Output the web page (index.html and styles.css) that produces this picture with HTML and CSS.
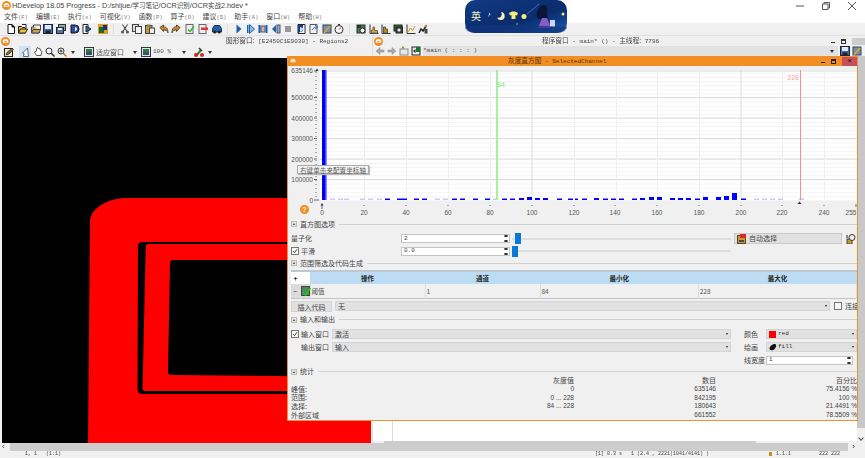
FILE: index.html
```html
<!DOCTYPE html>
<html lang="zh-CN">
<head>
  <meta charset="UTF-8" />
  <title>HDevelop 18.05 Progress</title>
  <link rel="stylesheet" href="styles.css">
</head>
<body>
  <!-- shared toolbar icons -->
  <svg class="defs" width="0" height="0">
    <symbol id="i-new" viewBox="0 0 10 10"><path d="M2 .5h4l2.500 2.500v6.500h-6.500z" fill="#fff" stroke="#111"/><path d="M6 .5v2.500h2.500" fill="#111" stroke="#111"/></symbol>
    <symbol id="i-open" viewBox="0 0 10 10"><path d="M.5 9V2.500h3l1 1h3V9z" fill="#e8b93c" stroke="#222"/><path d="M4 .5h4v4" fill="#fff" stroke="#222"/><path d="M.5 9l2-4h7l-2 4z" fill="#f0c040" stroke="#222"/></symbol>
    <symbol id="i-recent" viewBox="0 0 10 10"><path d="M.5 9V3h8v6z" fill="#d8b060" stroke="#444"/><path d="M2.500 3V1h7v5" fill="#eee" stroke="#444"/><path d="M.5 9l1.500-3.500h7.500L8 9z" fill="#c9a24f" stroke="#444"/></symbol>
    <symbol id="i-save" viewBox="0 0 10 10"><rect x=".5" y=".5" width="9" height="9" fill="#3d6ea5" stroke="#223"/><rect x="2" y="1" width="6" height="4" fill="#dfe8f2"/><rect x="2.500" y="6.500" width="5" height="3" fill="#222"/></symbol>
    <symbol id="i-saveall" viewBox="0 0 10 10"><rect x="2.500" y=".5" width="7" height="6" fill="#8aa" stroke="#333"/><rect x=".5" y="3.500" width="7" height="6" fill="#4f76a0" stroke="#223"/><rect x="2" y="4" width="4" height="2" fill="#eee"/></symbol>
    <symbol id="i-hdev" viewBox="0 0 10 10"><path d="M1 1h4a4 4 0 0 1 0 8H1z" fill="#2a4fa8" stroke="#111"/><path d="M5 3a2 2 0 0 1 0 4z" fill="#eee"/></symbol>
    <symbol id="i-play-doc" viewBox="0 0 10 10"><path d="M1 .5h5v9H1z" fill="#fff" stroke="#222"/><path d="M4 2l5 3-5 3z" fill="#2a6db5" stroke="#123"/></symbol>
    <symbol id="i-chip" viewBox="0 0 10 10"><rect width="10" height="10" fill="#d8a020"/><rect x="1" y="3" width="5" height="6" fill="#176a2e"/><rect x="5" y="1" width="4" height="5" fill="#1d2f8a"/></symbol>
    <symbol id="i-cut" viewBox="0 0 10 10"><path d="M2.500 .5l4.500 7M7.500 .5l-4.500 7" stroke="#333" fill="none"/><circle cx="2.500" cy="8" r="1.500" fill="#555"/><circle cx="7.500" cy="8" r="1.500" fill="#555"/></symbol>
    <symbol id="i-copy" viewBox="0 0 10 10"><rect x=".5" y=".5" width="6" height="7" fill="#ddd" stroke="#444"/><rect x="3.500" y="2.500" width="6" height="7" fill="#f4f4f4" stroke="#444"/></symbol>
    <symbol id="i-paste" viewBox="0 0 10 10"><rect x=".5" y="1.500" width="6.500" height="8" fill="#c2923c" stroke="#443"/><rect x="2" y=".5" width="3.500" height="2" fill="#777"/><rect x="4.500" y="4" width="5" height="5.500" fill="#eee" stroke="#444"/></symbol>
    <symbol id="i-undo" viewBox="0 0 10 10"><path d="M1 3.500L4.500 1v1.800c3 0 4.500 2 4.500 6-1-2.200-2-3-4.500-3v1.700z" fill="#d48a1e" stroke="#543"/></symbol>
    <symbol id="i-redo" viewBox="0 0 10 10"><path d="M9 3.500L5.500 1v1.800c-3 0-4.500 2-4.500 6 1-2.200 2-3 4.500-3v1.700z" fill="#d48a1e" stroke="#543"/></symbol>
    <symbol id="i-bp-on" viewBox="0 0 10 10"><rect x="1" y=".5" width="7" height="9" fill="#eee" stroke="#667"/><path d="M3 5.500l2 2 4-5" stroke="#38b52f" stroke-width="1.500" fill="none"/></symbol>
    <symbol id="i-bp-off" viewBox="0 0 10 10"><rect x="1" y=".5" width="7" height="9" fill="#eee" stroke="#667"/><rect x="3" y="3.500" width="7" height="2.500" fill="#e8333c"/></symbol>
    <symbol id="i-car" viewBox="0 0 10 10"><path d="M.5 8V4.500l2-3h5l2 3V8z" fill="#1f5fb2" stroke="#134"/><circle cx="2.800" cy="8" r="1.500" fill="#222"/><circle cx="7.200" cy="8" r="1.500" fill="#222"/></symbol>
    <symbol id="i-run" viewBox="0 0 10 10"><path d="M2.500 .5l5 4.500-5 4.500z" fill="#1c5fae"/></symbol>
    <symbol id="i-run-bar" viewBox="0 0 10 10"><rect x="1" y="1" width="1.500" height="8" fill="#1c5fae"/><path d="M3.500 .5l5 4.500-5 4.500z" fill="#8ab8e8" stroke="#1c5fae"/></symbol>
    <symbol id="i-step" viewBox="0 0 10 10"><rect x=".5" y="1" width="2" height="8" fill="#1c5fae"/><rect x="7.500" y="1" width="2" height="8" fill="#1c5fae"/><path d="M3 2h4v6H3z" fill="#bbb" stroke="#557"/></symbol>
    <symbol id="i-step-back" viewBox="0 0 10 10"><path d="M5 1L1 5l4 4z" fill="#1c5fae"/><rect x="6" y="1" width="3" height="8" fill="#9ab" stroke="#557"/></symbol>
    <symbol id="i-stop" viewBox="0 0 10 10"><rect x="2" y="2" width="6" height="6" fill="#999"/></symbol>
    <symbol id="i-doc-back" viewBox="0 0 10 10"><path d="M1 .5h7v9H1z" fill="#fff" stroke="#223"/><path d="M1 1h5v6l-5 2z" fill="#1a3f80"/><path d="M3 3l5 2-5 3z" fill="#cfe0f5"/></symbol>
    <symbol id="i-doc-fwd" viewBox="0 0 10 10"><path d="M1 .5h7v9H1z" fill="#f4f4f4" stroke="#556"/><path d="M3 6c2-3 3-3 5-3M6 1.500L9 3 6 5" stroke="#2a6db5" fill="none"/></symbol>
    <symbol id="i-wand" viewBox="0 0 10 10"><rect x="1" y="1" width="8" height="8" fill="#7a8fb0" stroke="#345"/><path d="M2 9L8 2" stroke="#e0a820" stroke-width="1.500"/></symbol>
    <symbol id="i-clock" viewBox="0 0 10 10"><circle cx="5" cy="5.500" r="4" fill="#f8f8f8" stroke="#333"/><path d="M5 5.500L7 3.500" stroke="#c22"/><rect x="4" y="0" width="2" height="1.200" fill="#333"/></symbol>
    <symbol id="i-img" viewBox="0 0 10 10"><rect x="1" y="1" width="8" height="8" fill="#3e7f4a" stroke="#233"/><circle cx="6.500" cy="6.500" r="2.500" fill="#eee" stroke="#222"/><rect x="1" y="1" width="4" height="3" fill="#333"/></symbol>
    <symbol id="i-hist" viewBox="0 0 10 10"><path d="M1 .5v9h8.500" stroke="#333" fill="none"/><path d="M2.500 9V6h1.500V3h1.500v3.500h3V9z" fill="#e0a820" stroke="#765"/></symbol>
    <symbol id="i-hist2" viewBox="0 0 10 10"><path d="M1 .5v9h8.500" stroke="#333" fill="none"/><path d="M2.500 9V3h2v2h2v4z" fill="#b88a20" stroke="#654"/></symbol>
    <symbol id="i-feat" viewBox="0 0 10 10"><rect x="1" y="1" width="8" height="6" fill="#2c7d3c" stroke="#222"/><rect x="3" y="3" width="6.500" height="6" fill="#444" stroke="#222"/><circle cx="6" cy="6" r="1.500" fill="#eee"/></symbol>
    <symbol id="i-line" viewBox="0 0 10 10"><path d="M1 .5v9h8.500" stroke="#333" fill="none"/><path d="M2 8l2.500-4 2 2.500L9 2" stroke="#d9a020" fill="none"/><path d="M1 5h8" stroke="#d9a020" stroke-dasharray="1 1"/></symbol>
    <symbol id="i-tree" viewBox="0 0 10 10"><path d="M1 9l2-4 2 2 3-5" stroke="#222" stroke-width="1.500" fill="none"/><rect x="6.500" y="5" width="3" height="4.500" fill="#444"/><circle cx="8" cy="2" r="1.200" fill="#c9851e"/></symbol>
    <symbol id="i-pencil" viewBox="0 0 10 10"><rect x=".5" y="1.500" width="8" height="8" fill="#efe8d0" stroke="#222"/><path d="M2 8l1-2.500L8 1l1.500 1.500L5 7z" fill="#8a6d2a" stroke="#222" stroke-width=".7"/></symbol>
    <symbol id="i-arrow" viewBox="0 0 10 10"><path d="M7.500 1L2.500 6l1.500.5L3.500 9.500h5z" fill="#f7f7f7" stroke="#444" stroke-width=".8"/></symbol>
    <symbol id="i-hand" viewBox="0 0 10 10"><path d="M1.500 5l2 3.500h4.500L9 4.500 7.500 3.500l-.5-2-1.200.3-.8-1.300-1.200.5-.3 3z" fill="#fff" stroke="#333" stroke-width=".8"/></symbol>
    <symbol id="i-zoom" viewBox="0 0 10 10"><circle cx="4" cy="4" r="3" fill="#eef4fa" stroke="#333"/><path d="M6 6l3.500 3.500" stroke="#333" stroke-width="1.500"/></symbol>
    <symbol id="i-zoomp" viewBox="0 0 10 10"><circle cx="4" cy="4" r="3" fill="#eef4fa" stroke="#333"/><path d="M6 6l3.500 3.500" stroke="#b8860b" stroke-width="1.500"/><path d="M2.500 4h3M4 2.500v3" stroke="#333"/></symbol>
    <symbol id="i-fit" viewBox="0 0 10 10"><rect x=".5" y=".5" width="9" height="9" fill="#dfe6ea" stroke="#334"/><rect x="2" y="2" width="6" height="3" fill="#2c7d3c"/><rect x="2" y="5" width="6" height="3" fill="#30556a"/></symbol>
    <symbol id="i-paint" viewBox="0 0 10 10"><path d="M2 9l5-6" stroke="#2a8a2a" stroke-width="2"/><circle cx="2" cy="8" r="2" fill="#e02020"/><circle cx="8" cy="8" r="2" fill="#e02020"/><path d="M5 1l3 3" stroke="#333" stroke-width="1.500"/></symbol>
    <symbol id="i-logo" viewBox="0 0 10 10"><circle cx="5" cy="5" r="5" fill="#f28c22"/><path d="M2 4.500a3 2.200 0 0 1 6 0v2H2z" fill="#fff"/><path d="M3.500 4.500h3v1h-3z" fill="#f28c22"/></symbol>
    <symbol id="i-check" viewBox="0 0 8 8"><rect x=".5" y=".5" width="7" height="7" fill="#f6f6f6" stroke="#777"/><path d="M2 4l1.500 1.700L6 2.300" stroke="#444" fill="none"/></symbol>
    <symbol id="i-check-empty" viewBox="0 0 8 8"><rect x=".5" y=".5" width="7" height="7" fill="#f6f6f6" stroke="#777"/></symbol>
    <symbol id="i-auto" viewBox="0 0 10 10"><rect x=".5" y="1.500" width="8" height="8" fill="#c99a2e" stroke="#543"/><rect x="3" y="0" width="6" height="4" fill="#e0242c"/><path d="M2 7h5" stroke="#234" stroke-width="1.500"/></symbol>
    <symbol id="i-auto-zoom" viewBox="0 0 10 10"><rect x="1" y="5" width="5" height="5" fill="#c99a2e" stroke="#543"/><circle cx="6" cy="3.500" r="3" fill="#eee" stroke="#333"/><path d="M1 1v3" stroke="#222"/></symbol>
    <symbol id="i-thresh" viewBox="0 0 10 10"><rect x=".5" y=".5" width="8" height="9" fill="#4d8a5a" stroke="#444"/><path d="M2 6l2.500 3L9.500 2" stroke="#22c422" stroke-width="1.500" fill="none"/></symbol>
    <symbol id="i-prog" viewBox="0 0 10 10"><rect x="1" y="1" width="8" height="8" fill="#eee" stroke="#222"/><path d="M5 1h4v5H5z" fill="#127a2c"/><path d="M2 5l2.500-2v4z" fill="#222"/></symbol>
    <symbol id="i-back" viewBox="0 0 10 10"><path d="M1 5l4-3.500V4h4v2H5v2.500z" fill="#aaa" stroke="#888" stroke-width=".5"/></symbol>
    <symbol id="i-fwd" viewBox="0 0 10 10"><path d="M9 5L5 1.500V4H1v2h4v2.500z" fill="#aaa" stroke="#888" stroke-width=".5"/></symbol>
    <symbol id="i-list" viewBox="0 0 10 10"><rect x="1" y="3" width="8" height="6" fill="#e8e8e8" stroke="#888"/><path d="M3 1.500h2" stroke="#b08a20" stroke-width="2"/></symbol>
  </svg>

  <header class="titlebar">
    <svg class="ic"><use href="#i-logo"/></svg>
    <span class="app-title">HDevelop 18.05 Progress - D:/shijue/<b>学习笔记</b>/OCR<b>识别</b>/OCR<b>实战</b>2.hdev *</span>
    <div class="win-buttons">
      <svg width="10" height="10" viewBox="0 0 10 10"><path d="M1 5h8" stroke="#555"/></svg>
      <svg width="10" height="10" viewBox="0 0 10 10"><path d="M1.500 3h5.500v5.500h-5.500zM3 3V1.500h5.500V7H7" fill="none" stroke="#555"/></svg>
      <svg width="10" height="10" viewBox="0 0 10 10"><path d="M1 1l8 8M9 1l-8 8" stroke="#555"/></svg>
    </div>
  </header>

  <nav class="menubar">
    <span>文件<i>(F)</i></span>
    <span>编辑<i>(E)</i></span>
    <span>执行<i>(x)</i></span>
    <span>可视化<i>(V)</i></span>
    <span>函数<i>(P)</i></span>
    <span>算子<i>(O)</i></span>
    <span>建议<i>(S)</i></span>
    <span>助手<i>(A)</i></span>
    <span>窗口<i>(W)</i></span>
    <span>帮助<i>(H)</i></span>
  </nav>

  <div class="toolbar">
    <div class="tb-group tb-first">
      <svg class="ic"><use href="#i-new"/></svg>
      <svg class="ic"><use href="#i-open"/></svg>
      <svg class="ic"><use href="#i-recent"/></svg>
      <svg class="ic"><use href="#i-save"/></svg>
      <svg class="ic"><use href="#i-saveall"/></svg>
    </div>
    <div class="tb-group tb-near">
      <svg class="ic"><use href="#i-hdev"/></svg>
      <svg class="ic"><use href="#i-play-doc"/></svg>
    </div>
    <div class="tb-group tb-mid"><svg class="ic"><use href="#i-chip"/></svg></div>
    <div class="tb-group tb-sep">
      <svg class="ic"><use href="#i-cut"/></svg>
      <svg class="ic"><use href="#i-copy"/></svg>
      <svg class="ic"><use href="#i-paste"/></svg>
    </div>
    <div class="tb-group tb-near">
      <svg class="ic"><use href="#i-undo"/></svg>
      <svg class="ic"><use href="#i-redo"/></svg>
    </div>
    <div class="tb-group tb-near">
      <svg class="ic"><use href="#i-bp-on"/></svg>
      <svg class="ic"><use href="#i-bp-off"/></svg>
    </div>
    <div class="tb-group tb-near"><svg class="ic"><use href="#i-car"/></svg></div>
    <div class="tb-group tb-sep">
      <svg class="ic"><use href="#i-run"/></svg>
      <svg class="ic"><use href="#i-run-bar"/></svg>
      <svg class="ic"><use href="#i-step"/></svg>
      <svg class="ic"><use href="#i-step-back"/></svg>
      <svg class="ic"><use href="#i-stop"/></svg>
    </div>
    <div class="tb-group tb-near">
      <svg class="ic"><use href="#i-doc-back"/></svg>
      <svg class="ic"><use href="#i-doc-fwd"/></svg>
      <svg class="ic"><use href="#i-wand"/></svg>
      <svg class="ic"><use href="#i-clock"/></svg>
    </div>
    <div class="tb-group tb-sep">
      <svg class="ic"><use href="#i-img"/></svg>
      <svg class="ic"><use href="#i-hist"/></svg>
      <svg class="ic"><use href="#i-hist2"/></svg>
      <svg class="ic"><use href="#i-feat"/></svg>
      <svg class="ic"><use href="#i-line"/></svg>
      <svg class="ic"><use href="#i-tree"/></svg>
    </div>
  </div>

  <main class="mdi">
    <section class="gfx-window">
      <div class="mdi-title gfx-title">
        <svg class="ic"><use href="#i-logo"/></svg>
        <span class="caption"><b>图形窗口:</b> [E2450C1E9030] - Regions2</span>
      </div>
      <div class="gfx-toolbar">
        <svg class="ic"><use href="#i-pencil"/></svg>
        <span class="gfx-selected"><svg class="ic"><use href="#i-arrow"/></svg></span>
        <svg class="ic"><use href="#i-hand"/></svg>
        <svg class="ic"><use href="#i-zoom"/></svg>
        <svg class="ic"><use href="#i-zoomp"/></svg>
        <span class="caret"></span>
        <svg class="ic gfx-fit"><use href="#i-fit"/></svg>
        <span class="gfx-label gfx-fit-label">适应窗口</span>
        <span class="caret"></span>
        <svg class="ic"><use href="#i-fit"/></svg>
        <span class="gfx-label gfx-zoom-label">100 %</span>
        <span class="caret"></span>
        <svg class="ic gfx-paint"><use href="#i-paint"/></svg>
        <span class="caret"></span>
      </div>
      <svg class="canvas" viewBox="2 58 369 385" preserveAspectRatio="none">
        <rect x="2" y="58" width="369" height="385" fill="#000"/>
        <path d="M88 443L90 222C90 208 108 198 127 198H371V443Z" fill="#f00"/>
        <path d="M138 246C138 243 140 242 143 242H371V394H142C139 394 137.500 392 137.500 389Z" fill="#000"/>
        <path d="M145.700 247C145.700 245 146 244 149 244H371V391H145C143 391 142.600 390 142.600 388Z" fill="#f00"/>
        <path d="M170 263C170 261 171 260 174 260H371V377L172 375C169 375 168 374 168 372Z" fill="#000"/>
      </svg>
    </section>

    <section class="prog-window">
      <div class="mdi-title prog-title">
        <svg class="ic"><use href="#i-logo"/></svg>
        <span class="caption"><b>程序窗口</b> - main* () - <b>主线程:</b> 7796</span>
        <div class="mdi-buttons">
          <span class="btn-min"></span>
          <span class="btn-max"></span>
          <span class="btn-gray"></span>
        </div>
      </div>
      <div class="prog-toolbar">
        <svg class="ic"><use href="#i-back"/></svg>
        <svg class="ic"><use href="#i-fwd"/></svg>
        <svg class="ic"><use href="#i-list"/></svg>
        <svg class="ic"><use href="#i-prog"/></svg>
        <span class="proc-name">*main ( : : : )<span class="caret"></span></span>
        <svg class="ic"><use href="#i-save"/></svg>
        <svg class="ic"><use href="#i-wand"/></svg>
      </div>
      <div class="prog-body">
        <div class="prog-main">
          <div class="prog-lines">
            <div class="gutter"></div>
          </div>
          <div class="prog-scroll-h"><span></span></div>
        </div>
        <div class="prog-scroll-v"><span class="scroll-down"></span></div>
      </div>
    </section>
  </main>

  <div class="hscroll"><span>‹</span><span>›</span></div>

  <footer class="status">
    <span class="status-left">1, 1 &nbsp; (1:1)</span>
    <span class="status-mid">[1] 0.3 s &nbsp; 1 (2.4 , 2221(1041/4141) )</span>
    <span class="status-dot"></span>
    <span>1.1.1</span>
    <span class="status-last">222 222</span>
  </footer>

  <!-- input method widget floating over the window -->
  <svg class="ime" viewBox="0 0 103 33">
    <defs>
      <linearGradient id="ime-bg" x1="0" y1="0" x2="1" y2="1">
        <stop offset="0" stop-color="#123a86"/>
        <stop offset=".6" stop-color="#0b2c6c"/>
        <stop offset="1" stop-color="#1a5ab0"/>
      </linearGradient>
    </defs>
    <rect width="102" height="33" rx="10" fill="url(#ime-bg)"/>
    <text x="6" y="20" class="ime-text">英</text>
    <path d="M24 13c1 1 1 2-.5 3" stroke="#fff" fill="none"/>
    <path d="M36 12a4 4 0 1 1-4 5.500a3.500 3.500 0 0 0 4-5.500z" fill="#f6efc0"/>
    <path d="M44 13l3-1.500h3l3 1.500-1 2.500-1.500-.5v4h-4v-4l-1.500.5z" fill="#f7ee7a"/>
    <circle cx="59" cy="16.500" r="2.500" fill="#f7ee7a"/>
    <path d="M62 14L74 4" stroke="#3f6fc0"/>
    <path d="M72 17c-1-7 3-12 7-12 3 0 4 3 3 7l1 7h-9z" fill="#0a1638"/>
    <path d="M73 28l4-10h5l4 10z" fill="#8a5cc8"/>
    <rect x="85" y="20" width="5" height="7" fill="#cfd6e8"/>
    <circle cx="98" cy="14" r="1.500" fill="#f7ee7a"/>
    <circle cx="52" cy="24" r=".7" fill="#cde"/>
    <path d="M0 27c30-4 60-2 102 0v0a10 6 0 0 1-10 6H10a10 6 0 0 1-10-6z" fill="#12357e" opacity=".7"/>
  </svg>

  <!-- histogram dialog floating over the MDI windows -->
  <section class="hist-window">
    <div class="hist-title">
      <svg class="ic"><use href="#i-logo"/></svg>
      <span class="caption"><b>灰度直方图</b> - SelectedChannel</span>
      <div class="mdi-buttons">
        <span class="btn-min btn-dark"></span>
        <span class="btn-max btn-dark"></span>
        <span class="btn-close">×</span>
      </div>
    </div>

    <svg class="plot" viewBox="288 66 569 151">
      <defs>
        <pattern id="minor-grid" width="10" height="4.100" patternUnits="userSpaceOnUse" y="97.500">
          <path d="M0 .5h10" stroke="#f4f4f4"/>
        </pattern>
      </defs>
      <rect x="288" y="66" width="569" height="151" fill="#f0f0f0"/>
      <rect x="320" y="70" width="537" height="131" fill="#fff"/>
      <rect x="320" y="70" width="537" height="131" fill="url(#minor-grid)"/>
      <g class="grid-h">
        <path d="M320 71H857M320 97.500H857M320 118H857M320 138.500H857M320 159H857M320 179.500H857"/>
      </g>
      <g class="grid-v">
        <path d="M364.500 70V200M406.500 70V200M448.500 70V200M490.500 70V200M574.500 70V200M616.500 70V200M657.500 70V200M699.500 70V200M782.500 70V200M824.500 70V200"/>
      </g>
      <path class="grid-v-major" d="M532 70V200M741 70V200"/>

      <path class="axis-dots" d="M316 72V200"/>
      <path class="axis-ticks" d="M314 71h3M314 97.500h3M314 118h3M314 138.500h3M314 159h3M314 179.500h3M314 200h5"/>
      <path class="axis-arrow" d="M317 68.500l-1.500 2.500h3z"/>
      <path class="axis-arrow" d="M322 203l-1.500 2.500h3z"/>
      <path class="axis-line" d="M322 205v4"/>
      <text class="axis-y" x="313" y="73">635146</text>
      <text class="axis-y" x="313" y="100">500000</text>
      <text class="axis-y" x="313" y="120.500">400000</text>
      <text class="axis-y" x="313" y="141">300000</text>
      <text class="axis-y" x="313" y="161.500">200000</text>
      <text class="axis-y" x="313" y="182">100000</text>
      <text class="axis-y" x="313" y="202.500">0</text>

      <g class="axis-x">
        <text x="322" y="215">0</text>
        <text x="364" y="215">20</text>
        <text x="406" y="215">40</text>
        <text x="448" y="215">60</text>
        <text x="490" y="215">80</text>
        <text x="532" y="215">100</text>
        <text x="574" y="215">120</text>
        <text x="615" y="215">140</text>
        <text x="657" y="215">160</text>
        <text x="699" y="215">180</text>
        <text x="741" y="215">200</text>
        <text x="782" y="215">220</text>
        <text x="824" y="215">240</text>
        <text x="851" y="215">255</text>
      </g>
      <path class="axis-marks" d="M364 205v1M406 205v1M448 205v1M490 205v1M532 205v1M574 205v1M615 205v1M657 205v1M699 205v1M741 205v1M782 205v1M824 205v1M856 204v3"/>
      <path class="axis-arrow" d="M799.500 201.500l-2 2.500h4z"/>

      <!-- histogram bars, outside the threshold range in pale blue -->
      <rect x="322" y="70" width="5" height="130" fill="#0000f0"/>
      <rect x="325.500" y="70" width="1.500" height="130" fill="#8c8cf8"/>
      <g fill="#c8c8fa">
        <rect x="330" y="198.500" width="5" height="1.500"/>
        <rect x="338" y="198.500" width="5" height="1.500"/>
        <rect x="344" y="198.500" width="5" height="1.500"/>
        <rect x="360" y="198.500" width="5" height="1.500"/>
        <rect x="368" y="198.500" width="5" height="1.500"/>
        <rect x="377" y="198.500" width="5" height="1.500"/>
        <rect x="435" y="198.500" width="5" height="1.500"/>
        <rect x="443" y="198.500" width="5" height="1.500"/>
        <rect x="493" y="198.500" width="5" height="1.500"/>
        <rect x="754" y="198.500" width="5" height="1.500"/>
        <rect x="762" y="198.500" width="5" height="1.500"/>
        <rect x="770" y="198.500" width="5" height="1.500"/>
        <rect x="778" y="198.500" width="5" height="1.500"/>
        <rect x="799" y="198.500" width="5" height="1.500"/>
      </g>
      <g fill="#0000ff">
        <rect x="385" y="198.500" width="5" height="1.500"/>
        <rect x="397" y="198.500" width="5" height="1.500"/>
        <rect x="402" y="198.500" width="5" height="1.500"/>
        <rect x="414" y="198.500" width="5" height="1.500"/>
        <rect x="422" y="198.500" width="5" height="1.500"/>
        <rect x="452" y="198.500" width="5" height="1.500"/>
        <rect x="460" y="198.500" width="5" height="1.500"/>
        <rect x="473" y="198.500" width="5" height="1.500"/>
        <rect x="485" y="198.500" width="5" height="1.500"/>
        <rect x="502" y="198.500" width="5" height="1.500"/>
        <rect x="510" y="198.500" width="5" height="1.500"/>
        <rect x="519" y="198" width="5" height="2"/>
        <rect x="527" y="197" width="5" height="3"/>
        <rect x="535" y="198" width="5" height="2"/>
        <rect x="543" y="198" width="5" height="2"/>
        <rect x="557" y="198.500" width="5" height="1.500"/>
        <rect x="568" y="198.500" width="5" height="1.500"/>
        <rect x="575" y="198.500" width="3" height="1.500"/>
        <rect x="582" y="198.500" width="5" height="1.500"/>
        <rect x="594" y="198" width="5" height="2"/>
        <rect x="603" y="198.500" width="5" height="1.500"/>
        <rect x="611" y="198.500" width="5" height="1.500"/>
        <rect x="619" y="198.500" width="5" height="1.500"/>
        <rect x="632" y="198.500" width="5" height="1.500"/>
        <rect x="640" y="198" width="5" height="2"/>
        <rect x="649" y="197" width="5" height="3"/>
        <rect x="657" y="197" width="5" height="3"/>
        <rect x="670" y="198" width="5" height="2"/>
        <rect x="678" y="198" width="5" height="2"/>
        <rect x="686" y="198" width="5" height="2"/>
        <rect x="695" y="198.500" width="5" height="1.500"/>
        <rect x="703" y="197" width="5" height="3"/>
        <rect x="716" y="197" width="5" height="3"/>
        <rect x="724" y="196" width="5" height="4"/>
        <rect x="732" y="193" width="5" height="7"/>
        <rect x="741" y="198.500" width="5" height="1.500"/>
      </g>

      <path class="line-min" d="M497 70V200"/>
      <path class="line-max" d="M800.500 70V200"/>
      <text class="label-min" x="497" y="87">84</text>
      <text class="label-max" x="799" y="80">228</text>

      <circle cx="304.500" cy="209.500" r="4.500" fill="#f08c22"/>
      <text class="help-mark" x="304.500" y="212">?</text>
    </svg>
    <div class="plot-tip">右键单击来配置坐标轴</div>

    <div class="hist-body">
      <div class="section"><span class="fold"></span><span>直方图选项</span><span class="rule"></span></div>
      <div class="row row-quant">
        <span class="row-label">量子化</span>
        <span class="spin spin-wide">2<span class="spin-arrows"></span></span>
        <span class="slider slider-quant"><span class="handle"></span></span>
        <span class="auto-btn"><svg class="ic"><use href="#i-auto"/></svg>自动选择</span>
        <svg class="ic auto-extra"><use href="#i-auto-zoom"/></svg>
      </div>
      <div class="row">
        <span class="row-label">
          <svg class="check"><use href="#i-check"/></svg>平滑
        </span>
        <span class="spin spin-wide">0.0<span class="spin-arrows"></span></span>
        <span class="slider"><span class="handle"></span></span>
      </div>

      <div class="section"><span class="fold"></span><span>范围筛选及代码生成</span><span class="rule"></span></div>
      <table class="ranges">
        <tr>
          <th class="cell-add">+</th>
          <th class="cell-blank"></th>
          <th>操作</th>
          <th>通道</th>
          <th>最小化</th>
          <th>最大化</th>
        </tr>
        <tr>
          <td class="cell-del">−</td>
          <td class="cell-icon"><svg class="ic"><use href="#i-thresh"/></svg></td>
          <td>阈值</td>
          <td>1</td>
          <td>84</td>
          <td>228</td>
        </tr>
      </table>
      <div class="row row-code">
        <span class="plain-btn">插入代码</span>
        <span class="combo combo-code">无<span class="combo-caret"></span></span>
        <svg class="check"><use href="#i-check-empty"/></svg>
        <span class="code-link">连接</span>
      </div>

      <div class="section section-io"><span class="fold"></span><span>输入和输出</span><span class="rule"></span></div>
      <div class="io-grid">
        <span class="io-label"><svg class="check"><use href="#i-check"/></svg>输入窗口</span>
        <span class="combo">激活<span class="combo-caret"></span></span>
        <span class="io-side">颜色</span>
        <span class="combo combo-side"><span class="swatch"></span>red<span class="combo-caret"></span></span>

        <span class="io-label">输出窗口</span>
        <span class="combo">输入<span class="combo-caret"></span></span>
        <span class="io-side">绘画</span>
        <span class="combo combo-side"><svg class="blob" viewBox="0 0 8 8"><path d="M0 5c0-2 3-5 6-5 2 0 2 3 1 4-1 2-3 4-5 3-1 0-2-1-2-2z" fill="#111"/></svg>fill<span class="combo-caret"></span></span>

        <span class="io-side io-width">线宽度</span>
        <span class="spin spin-width">1<span class="spin-arrows"></span></span>
      </div>

      <div class="section section-stats"><span class="fold"></span><span>统计</span><span class="rule"></span></div>
      <div class="stats">
        <span></span><span class="stats-head">灰度值</span><span class="stats-head">数目</span><span class="stats-head">百分比</span>
        <span class="stats-name">峰值:</span><span>0</span><span>635146</span><span>75.4156 %</span>
        <span class="stats-name">范围:</span><span>0 ... 228</span><span>842195</span><span>100 %</span>
        <span class="stats-name">选择:</span><span>84 ... 228</span><span>180643</span><span>21.4491 %</span>
        <span class="stats-name">外部区域</span><span></span><span>661552</span><span>78.5509 %</span>
      </div>
    </div>
  </section>
</body>
</html>
```

FILE: styles.css
```css
/* HDevelop main window */
* {
  box-sizing: border-box;
}
body {
  margin: 0;
  width: 865px;
  height: 458px;
  overflow: hidden;
  position: relative;
  display: flex;
  flex-direction: column;
  background: #f0f0f0;
  color: #333;
  font-family: "Noto Sans CJK SC", "Liberation Sans", sans-serif;
  font-size: 7px;
  line-height: 1;
  /* the capture is a scaled-down, soft screenshot */
  filter: blur(.3px);
}
.defs {
  position: absolute;
}
.ic {
  width: 10px;
  height: 10px;
  flex: none;
}

/* Title and menu */
.titlebar {
  height: 11px;
  background: #fff;
  display: flex;
  align-items: center;
  padding-left: 2px;
}
.titlebar .ic {
  width: 9px;
  height: 9px;
}
.app-title {
  margin-left: 1px;
  font-family: "Liberation Sans", "Noto Sans CJK SC", sans-serif;
  font-size: 7.300px;
  color: #444;
}
.app-title b {
  font-size: 6.500px;
  font-weight: 400;
}
.win-buttons {
  margin-left: auto;
  margin-right: 8px;
  display: flex;
  gap: 16px;
}
.menubar {
  height: 12px;
  background: #fff;
  display: flex;
  align-items: center;
  gap: 8px;
  padding-left: 4px;
  color: #444;
}
.menubar i {
  font-family: "Liberation Mono", monospace;
  font-style: normal;
  font-size: 5.500px;
  color: #777;
}
.toolbar {
  height: 13px;
  display: flex;
  align-items: center;
  padding-left: 2px;
  background: #f0f0f0;
  border-bottom: 1px solid #e0e0e0;
}
.tb-group {
  display: flex;
  gap: 2.400px;
}
.tb-first {
  margin-left: 4px;
}
.tb-near {
  margin-left: 4px;
}
.tb-mid {
  margin-left: 6px;
}
.tb-sep {
  margin-left: 5px;
  padding-left: 6px;
  border-left: 1px solid #ddd;
}

/* MDI windows */
.mdi {
  flex: 1;
  min-height: 0;
  display: flex;
}
.mdi-title {
  height: 10px;
  flex: none;
  display: flex;
  align-items: center;
  padding-left: 1px;
  background: #f0f0f0;
}
.mdi-title .ic {
  width: 9px;
  height: 9px;
}
.caption {
  font-family: "Liberation Mono", "Noto Sans CJK SC", monospace;
  font-size: 6px;
  color: #444;
  white-space: pre;
}
.caption b {
  font-family: "Noto Sans CJK SC", sans-serif;
  font-size: 6.700px;
  font-weight: 400;
}
.gfx-window {
  width: 371px;
  display: flex;
  flex-direction: column;
}
.gfx-title .caption {
  margin-left: 216px;
}
.gfx-toolbar {
  height: 12px;
  flex: none;
  display: flex;
  align-items: center;
  gap: 2px;
  padding-left: 4px;
}
.gfx-selected {
  width: 12px;
  height: 12px;
  margin-left: 3px;
  display: flex;
  align-items: center;
  justify-content: center;
  background: #cce4f7;
}
.caret {
  width: 0;
  height: 0;
  flex: none;
  border: 2px solid transparent;
  border-top: 3px solid #333;
  border-bottom: 0;
  margin: 0 2px;
}
.gfx-fit {
  margin-left: 5px;
}
.gfx-label {
  color: #555;
  white-space: nowrap;
}
.gfx-fit-label {
  width: 33px;
}
.gfx-zoom-label {
  width: 25px;
  font-family: "Liberation Mono", monospace;
  font-size: 6px;
}
.gfx-paint {
  margin-left: 4px;
}
.canvas {
  flex: 1;
  min-height: 0;
  width: 369px;
  margin-left: 2px;
  display: block;
}
.prog-window {
  flex: 1;
  min-width: 0;
  margin-left: 1px;
  display: flex;
  flex-direction: column;
  border-left: 1px solid #ddd;
}
.prog-title .caption {
  margin-left: 159px;
}
.mdi-buttons {
  margin-left: auto;
  display: flex;
  align-items: center;
  gap: 6px;
}
.btn-min {
  width: 4px;
  height: 1px;
  margin-top: 3px;
  background: #333;
}
.btn-max {
  width: 5px;
  height: 5px;
  border: 1px solid #333;
  border-top-width: 2px;
}
.btn-gray {
  width: 13px;
  height: 7px;
  background: #ccc;
}
.prog-toolbar {
  height: 10px;
  flex: none;
  display: flex;
  align-items: center;
  gap: 2px;
  padding-left: 2px;
  padding-right: 3px;
  background: #f0f0f0;
}
.proc-name {
  flex: 1;
  height: 10px;
  display: flex;
  align-items: center;
  justify-content: space-between;
  padding-right: 2px;
  background: #e2e2e2;
  font-family: "Liberation Mono", monospace;
  font-size: 6px;
  color: #444;
}
.prog-body {
  flex: 1;
  min-height: 0;
  display: flex;
  background: #fff;
}
.prog-main {
  flex: 1;
  display: flex;
  flex-direction: column;
}
.prog-lines {
  flex: 1;
}
.gutter {
  width: 20px;
  height: 100%;
  border-right: 1px solid #ddd;
}
.prog-scroll-h {
  height: 2px;
  padding-left: 11px;
  background: #f0f0f0;
}
.prog-scroll-h span {
  display: block;
  width: 372px;
  height: 2px;
  background: #ccc;
}
.prog-scroll-v {
  width: 8px;
  display: flex;
  align-items: flex-end;
  justify-content: center;
  padding-bottom: 3px;
  background: linear-gradient(#c8c8c8 0, #c8c8c8 372px, #f0f0f0 372px);
}
.scroll-down {
  width: 4px;
  height: 4px;
  border-right: 1px solid #555;
  border-bottom: 1px solid #555;
  transform: rotate(45deg);
}
.hscroll {
  height: 8px;
  flex: none;
  display: flex;
  justify-content: space-between;
  align-items: center;
  padding: 0 10px 0 2px;
  font-family: "Liberation Sans", sans-serif;
  font-size: 8px;
  background: linear-gradient(90deg, #f0f0f0 10px, #cdcdcd 10px, #cdcdcd 848px, #f0f0f0 848px);
}
.status {
  height: 7px;
  flex: none;
  display: flex;
  gap: 4px;
  padding: 1px 0 0 25px;
  font-family: "Liberation Mono", monospace;
  font-size: 5px;
  color: #444;
}
.status-left {
  width: 566px;
}
.status-mid {
  width: 170px;
  white-space: nowrap;
}
.status-dot {
  width: 3px;
  height: 4px;
  background: #c98a1e;
}
.status-last {
  margin-left: 24px;
}

/* Input method badge */
.ime {
  position: absolute;
  left: 465px;
  top: 0;
  width: 103px;
  height: 33px;
}
.ime-text {
  font-size: 10px;
  fill: #f3f0c4;
}

/* Histogram dialog */
.hist-window {
  position: absolute;
  left: 287px;
  top: 56px;
  width: 571px;
  height: 365px;
  display: flex;
  flex-direction: column;
  overflow: hidden;
  background: #f0f0f0;
  border: solid #ea9430;
  border-width: 0 1px 1px;
}
.hist-title {
  height: 10px;
  flex: none;
  display: flex;
  align-items: center;
  background: #f28e24;
}
.hist-title .ic {
  width: 8px;
  height: 8px;
  margin-left: 1px;
}
.hist-title .caption {
  margin-left: 211px;
  color: #553311;
}
.btn-dark {
  background: #222;
}
.btn-max.btn-dark {
  background: none;
  border-color: #222;
}
.btn-close {
  width: 15px;
  height: 9px;
  text-align: center;
  font-family: "Liberation Sans", sans-serif;
  font-size: 8px;
  color: #111;
  background: #c8505a;
}
.plot {
  width: 569px;
  height: 151px;
  flex: none;
  display: block;
  font-family: "Liberation Sans", sans-serif;
  font-size: 6.500px;
}
.grid-h path {
  stroke: #dcdcdc;
  fill: none;
}
.grid-v path {
  stroke: #efefef;
  fill: none;
}
.grid-v-major {
  stroke: #dcdcdc;
  fill: none;
}
.axis-dots {
  stroke: #666;
  stroke-dasharray: 1 3;
  fill: none;
}
.axis-ticks,
.axis-line,
.axis-marks {
  stroke: #666;
  fill: none;
}
.axis-arrow {
  fill: #333;
}
.axis-y {
  text-anchor: end;
  fill: #555;
}
.axis-x text {
  text-anchor: middle;
  fill: #555;
}
.line-min {
  stroke: #a8f0a0;
  stroke-width: 2;
}
.line-max {
  stroke: #f89090;
  stroke-width: 1;
}
.label-min {
  font-family: "Liberation Mono", monospace;
  fill: #78e878;
}
.label-max {
  font-family: "Liberation Mono", monospace;
  fill: #f8a0a0;
  text-anchor: end;
}
.help-mark {
  text-anchor: middle;
  font-size: 7px;
  font-weight: 700;
  fill: #fff;
}
.plot-tip {
  position: absolute;
  left: 9px;
  top: 109px;
  height: 9px;
  padding: 1px 2px;
  background: #f4f4f4;
  border: 1px solid #aaa;
  box-shadow: 1px 1px 1px #bbb;
  font-size: 6.500px;
  letter-spacing: .1px;
  color: #555;
  white-space: nowrap;
}
.hist-body {
  flex: 1;
  min-height: 0;
  padding: 1px 0 0 3px;
  color: #444;
}
.section {
  height: 12px;
  display: flex;
  align-items: center;
  gap: 2px;
  color: #444;
}
.section-io {
  margin-top: 1px;
}
.section-stats {
  height: 10px;
}
.fold {
  width: 6px;
  height: 6px;
  margin-right: 1px;
  display: flex;
  align-items: center;
  justify-content: center;
  flex: none;
  background: #e4e4e4;
  border: 1px solid #bbb;
}
.fold::before {
  content: "";
  border: 1.500px solid transparent;
  border-bottom: 2px solid #333;
  border-top: 0;
}
.rule {
  flex: 1;
  height: 1px;
  margin-left: 2px;
  background: #d0d0d0;
}
.row {
  height: 12px;
  display: flex;
  align-items: center;
}
.row-quant {
  height: 13px;
  margin-top: 2px;
}
.row-label {
  width: 110px;
  display: flex;
  align-items: center;
  flex: none;
}
.check {
  width: 8px;
  height: 8px;
  margin-right: 2px;
  flex: none;
}
.spin {
  height: 9px;
  display: flex;
  align-items: center;
  padding-left: 2px;
  background: #fff;
  border: 1px solid #c4c4c4;
  font-family: "Liberation Mono", monospace;
  font-size: 6px;
  color: #444;
}
.spin-wide {
  width: 109px;
}
.spin-arrows {
  width: 4px;
  height: 7px;
  margin-left: auto;
  margin-right: 1px;
  border-top: 2px solid #333;
  border-bottom: 2px solid #333;
  transform: scaleX(.8);
}
.slider {
  width: 219px;
  height: 11px;
  margin-left: 2px;
  display: flex;
  background: linear-gradient(#dedede, #dedede) center / 100% 2px no-repeat;
}
.slider-quant .handle {
  margin-left: 3px;
}
.handle {
  width: 6px;
  height: 11px;
  background: #0a78d7;
}
.auto-btn {
  width: 108px;
  height: 11px;
  margin-left: 3px;
  display: flex;
  align-items: center;
  gap: 2px;
  padding-left: 2px;
  background: #e1e1e1;
  border: 1px solid #c8c8c8;
}
.auto-extra {
  margin-left: 4px;
}
.ranges {
  width: 566px;
  height: 28px;
  margin: 1px 0 1px;
  table-layout: fixed;
  border-collapse: collapse;
  border-top: 2px solid #bcc8d2;
  border-bottom: 1px solid #c4c4c4;
  font-size: 6.500px;
}
.ranges th {
  height: 13px;
  padding: 0;
  background: #bbdcf3;
  color: #222;
  font-weight: 700;
}
.ranges td {
  height: 14px;
  padding: 0 0 0 1px;
  border-right: 1px solid #ddd;
  color: #555;
}
.ranges th.cell-add {
  width: 9px;
  background: #fff;
}
.ranges th.cell-blank {
  width: 10px;
  background: #fff;
}
.ranges th:nth-child(3),
.ranges th:nth-child(4) {
  width: 115px;
}
.ranges td.cell-del {
  padding: 0;
  text-align: center;
  background: #dcdcdc;
  font-weight: 700;
}
.ranges td.cell-icon {
  padding: 0;
  background: #dcdcdc;
}
.row-code {
  height: 13px;
  margin-top: 1px;
  gap: 3px;
}
.row-code .check {
  margin-right: 0;
}
.code-link {
  flex: none;
  white-space: nowrap;
}
.plain-btn {
  width: 41px;
  height: 11px;
  line-height: 10px;
  text-align: center;
  flex: none;
  background: #e1e1e1;
  border: 1px solid #d4d4d4;
}
.combo {
  height: 10px;
  min-width: 0;
  display: flex;
  align-items: center;
  padding-left: 2px;
  background: #e1e1e1;
  border: 1px solid #d4d4d4;
}
.combo-code {
  width: 495px;
  flex: none;
  margin-right: 1px;
}
.combo-caret {
  width: 0;
  height: 0;
  margin-left: auto;
  margin-right: 2px;
  border: 1.500px solid transparent;
  border-top: 2px solid #222;
  border-bottom: 0;
}
.io-grid {
  display: grid;
  grid-template-columns: 41px 399px 35px 91px;
  grid-auto-rows: 13px;
  align-items: center;
  margin-top: 2px;
}
.io-label {
  display: flex;
  align-items: center;
  justify-content: flex-end;
  padding-right: 3px;
}
.io-label .check {
  margin-right: auto;
}
.io-side {
  padding-left: 13px;
}
.io-width {
  grid-column: 3;
}
.combo-side {
  font-family: "Liberation Mono", monospace;
  font-size: 6px;
  color: #333;
}
.swatch {
  width: 7px;
  height: 7px;
  margin-right: 2px;
  background: #f00;
}
.blob {
  width: 8px;
  height: 7px;
  margin-right: 1px;
}
.spin-width {
  width: 87px;
}
.stats {
  display: grid;
  grid-template-columns: 140px 143px 142px 141px;
  grid-auto-rows: 8.600px;
  align-items: center;
  font-family: "Liberation Sans", "Noto Sans CJK SC", sans-serif;
  font-size: 6.500px;
  text-align: right;
  white-space: nowrap;
}
.stats-head {
  font-family: "Noto Sans CJK SC", sans-serif;
  font-size: 7px;
}
.stats-name {
  font-family: "Noto Sans CJK SC", sans-serif;
  font-size: 7px;
  text-align: left;
}
```
